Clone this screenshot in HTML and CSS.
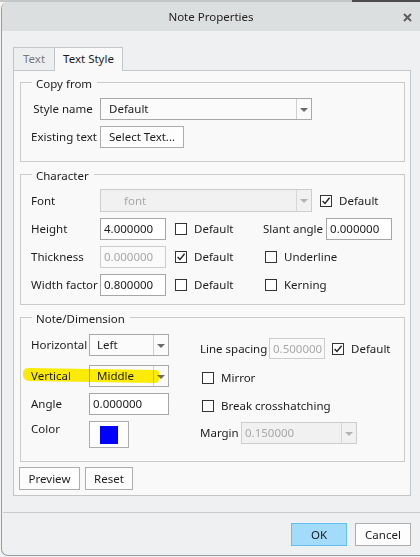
FILE: index.html
```html
<!DOCTYPE html>
<html>
<head>
<meta charset="utf-8">
<link rel="stylesheet" href="styles.css">
</head>
<body>
<div class="backdrop"></div>
<div class="dialog">
  <div class="titlebar">
    <span></span>
    <span class="title">Note Properties</span>
    <span class="close"><svg width="9" height="9" viewBox="0 0 9 9"><path d="M1 1 L8 8 M8 1 L1 8" stroke="#5c5c5c" stroke-width="1.9" fill="none"/></svg></span>
  </div>

  <div class="tabs">
    <div class="tab">Text</div>
    <div class="tab active">Text Style</div>
  </div>

  <div class="panel">
    <fieldset class="group g-copy">
      <legend>Copy from</legend>
      <div class="row">
        <span class="lbl lbl-center">Style name</span>
        <div class="combo w-style"><span class="val val-style">Default</span><span class="arrow"><i></i></span></div>
      </div>
      <div class="row mt6">
        <span class="lbl lbl-center">Existing text</span>
        <button class="btn w-select">Select Text...</button>
      </div>
    </fieldset>

    <fieldset class="group g-char">
      <legend>Character</legend>
      <div class="row h23">
        <span class="lbl lbl-char">Font</span>
        <div class="combo disabled w-style"><span class="val val-font">font</span><span class="arrow"><i></i></span></div>
        <span class="check checked ml8"></span><span class="ctext">Default</span>
      </div>
      <div class="row mt6">
        <span class="lbl lbl-char">Height</span>
        <div class="input w-num">4.000000</div>
        <div class="cell"><span class="check"></span><span class="ctext">Default</span></div>
        <span class="lbl">Slant angle</span>
        <div class="input w-num ml3">0.000000</div>
      </div>
      <div class="row mt6">
        <span class="lbl lbl-char">Thickness</span>
        <div class="input disabled w-num">0.000000</div>
        <div class="cell"><span class="check checked"></span><span class="ctext">Default</span></div>
        <span class="check ml2"></span><span class="ctext">Underline</span>
      </div>
      <div class="row mt6">
        <span class="lbl lbl-char">Width factor</span>
        <div class="input w-num">0.800000</div>
        <div class="cell"><span class="check"></span><span class="ctext">Default</span></div>
        <span class="check ml2"></span><span class="ctext">Kerning</span>
      </div>
    </fieldset>

    <fieldset class="group g-note">
      <legend>Note/Dimension</legend>
      <div class="cols">
        <div class="col-left">
          <div class="row">
            <span class="lbl lbl-note">Horizontal</span>
            <div class="combo w-align"><span class="val val-align">Left</span><span class="arrow"><i></i></span></div>
          </div>
          <div class="row mt9">
            <span class="lbl lbl-note">Vertical</span>
            <div class="combo w-align"><span class="val val-align">Middle</span><span class="arrow"><i></i></span></div>
          </div>
          <div class="row mt6">
            <span class="lbl lbl-note">Angle</span>
            <div class="input w-align">0.000000</div>
          </div>
          <div class="row row-color mt6">
            <span class="lbl lbl-note lbl-top">Color</span>
            <div class="colorbtn"><span class="swatch"></span></div>
          </div>
        </div>
        <div class="col-right">
          <div class="row h21">
            <span class="lbl lbl-ls">Line spacing</span>
            <div class="input disabled w-ls">0.500000</div>
            <span class="check checked ml7"></span><span class="ctext">Default</span>
          </div>
          <div class="row mt8">
            <span class="check ml2"></span><span class="ctext">Mirror</span>
          </div>
          <div class="row mt6">
            <span class="check ml2"></span><span class="ctext">Break crosshatching</span>
          </div>
          <div class="row mt5">
            <span class="lbl lbl-margin">Margin</span>
            <div class="combo disabled w-margin"><span class="val val-margin">0.150000</span><span class="arrow"><i></i></span></div>
          </div>
        </div>
      </div>
    </fieldset>

    <div class="panel-buttons">
      <button class="btn w-preview">Preview</button>
      <button class="btn w-reset">Reset</button>
    </div>
  </div>

  <div class="sep"></div>

  <div class="footer">
    <button class="btn ok w-dlg">OK</button>
    <button class="btn w-dlg">Cancel</button>
  </div>

  <div class="highlight"></div>
</div>
</body>
</html>
```

FILE: styles.css
```css
html, body {
  margin: 0;
  padding: 0;
  height: 557px;
  overflow: hidden;
}
body {
  background: #f3f3f3;
  font-family: "Noto Sans", "Open Sans", sans-serif;
  font-size: 11.5px;
  line-height: 16px;
  color: #1c1c1c;
}
.backdrop {
  height: 2px;
  background: linear-gradient(to right, #c3c7c7 0, #c3c7c7 352px, #4d4d4d 352px);
}
.dialog {
  position: relative;
  margin-left: 1px;
  height: 553px;
  background: #eff0f2;
  border-left: 1px solid #9c9c9c;
  border-bottom: 1px solid #9c9c9c;
  border-radius: 7px 0 0 7px;
  overflow: hidden;
}
.titlebar {
  height: 29px;
  background: #dcdfdf;
  display: grid;
  grid-template-columns: 1fr auto 1fr;
  align-items: center;
}
.title {
  color: #222;
}
.close {
  justify-self: end;
  padding-right: 8px;
  display: flex;
  align-items: center;
  padding-top: 1px;
}

/* tabs */
.tabs {
  display: flex;
  margin-top: 16px;
  margin-left: 11px;
  height: 23px;
  align-items: flex-start;
  position: relative;
  z-index: 2;
}
.tab {
  box-sizing: border-box;
  height: 23px;
  border: 1px solid #c3c6c8;
  border-bottom: none;
  background: #eceef0;
  color: #7a7a7a;
  padding: 0;
  white-space: nowrap;
  display: flex;
  align-items: center;
  justify-content: center;
  width: 42px;
}
.tab.active {
  width: 69px;
  height: 24px;
  margin-left: -1px;
  padding-bottom: 1px;
  background: #f9f9f9;
  color: #1c1c1c;
}

.panel {
  box-sizing: border-box;
  margin-left: 11px;
  width: 398px;
  background: #f9f9f9;
  border: 1px solid #c3c6c8;
  padding: 0 0 5px 0;
}

/* group boxes */
.group {
  margin: 0 5px 0 6px;
  border: 1px solid #cbcbcb;
  padding: 0 0 0 10px;
  min-width: 0;
}
.group legend {
  margin-left: 1px;
  padding: 4px 5px 0 4px;
  line-height: 16px;
}
.g-copy {
  margin-top: 1px;
  padding-top: 6px;
  padding-bottom: 13px;
}
.g-char {
  margin-top: 2px;
  padding-top: 5px;
  padding-bottom: 8px;
}
.g-note {
  margin-top: 2px;
  padding-top: 0;
  padding-bottom: 13px;
}

.row {
  display: flex;
  align-items: center;
  height: 22px;
}
.h23 { height: 23px; }
.h21 { height: 21px; }
.mt5 { margin-top: 5px; }
.mt6 { margin-top: 6px; }
.mt8 { margin-top: 8px; }
.mt9 { margin-top: 9px; }
.ml2 { margin-left: 2px; }
.ml3 { margin-left: 3px; }
.ml7 { margin-left: 7px; }
.ml8 { margin-left: 8px; }

.lbl {
  white-space: nowrap;
  flex: none;
}
.lbl-center {
  width: 64px;
  text-align: center;
  margin-right: 5px;
}
.lbl-char { width: 69px; }
.lbl-note { width: 58px; }
.lbl-ls { width: 69px; }
.lbl-margin { width: 41px; }

/* combo boxes */
.combo {
  box-sizing: border-box;
  height: 100%;
  border: 1px solid #a9a9a9;
  background: #fbfbfb;
  display: flex;
  align-items: center;
  flex: none;
}
.combo .val {
  flex: 1;
  white-space: nowrap;
}
.combo .arrow {
  width: 14px;
  height: 100%;
  border-left: 1px solid #cfcfcf;
  display: flex;
  align-items: center;
  justify-content: center;
}
.combo .arrow i {
  width: 0;
  height: 0;
  border-left: 4px solid transparent;
  border-right: 4px solid transparent;
  border-top: 4px solid #6b6b6b;
  margin-top: 1px;
}
.combo.disabled {
  background: #f1f1f1;
  border-color: #cdcdcd;
  color: #a8a8a8;
}
.combo.disabled .arrow {
  border-left-color: #d6d6d6;
}
.combo.disabled .arrow i {
  border-top-color: #b4b4b4;
}
.w-style { width: 212px; }
.w-align { width: 80px; }
.w-margin { width: 116px; }
.val-style { padding-left: 8px; }
.val-font { padding-left: 23px; }
.val-align { padding-left: 7px; }
.val-margin { padding-left: 3px; }

/* inputs */
.input {
  box-sizing: border-box;
  height: 100%;
  border: 1px solid #a6a6a6;
  background: #ffffff;
  padding-left: 3px;
  display: flex;
  align-items: center;
  flex: none;
}
.input.disabled {
  border-color: #cdcdcd;
  background: #fafafa;
  color: #a8a8a8;
}
.w-num { width: 66px; }
.w-ls { width: 56px; }

/* checkboxes */
.cell {
  width: 97px;
  display: flex;
  align-items: center;
  flex: none;
  padding-left: 0;
}
.cell .check { margin-left: 9px; }
.check {
  box-sizing: border-box;
  width: 12px;
  height: 12px;
  border: 1px solid #333333;
  background: #ffffff;
  flex: none;
  position: relative;
}
.check.checked {
  background: #ffffff url("data:image/svg+xml;utf8,<svg xmlns='http://www.w3.org/2000/svg' width='10' height='10' viewBox='0 0 10 10'><path d='M1.6 5 L4 7.4 L8.6 1.8' stroke='%23222' stroke-width='1.4' fill='none'/></svg>") center/10px 10px no-repeat;
}
.ctext {
  margin-left: 7px;
  white-space: nowrap;
}

/* buttons */
.btn {
  box-sizing: border-box;
  height: 23px;
  border: 1px solid #adadad;
  background: #fdfdfd;
  font: inherit;
  color: #1c1c1c;
  padding: 0;
  display: flex;
  align-items: center;
  justify-content: center;
}
.w-select { width: 84px; height: 22px; }
.w-preview { width: 61px; }
.w-reset { width: 48px; }
.w-dlg { width: 56px; }
.btn.ok {
  background: #a3dcfa;
  border-color: #63c0f0;
}

/* note/dimension columns */
.cols {
  display: flex;
  align-items: flex-start;
}
.col-left {
  width: 138px;
  padding-top: 7px;
}
.col-right {
  margin-left: 31px;
  padding-top: 11px;
}
.row-color {
  height: 27px;
  align-items: flex-start;
}
.lbl-top {
  padding-top: 0;
  line-height: 16px;
}
.colorbtn {
  box-sizing: border-box;
  width: 40px;
  height: 27px;
  border: 1px solid #adadad;
  background: #fdfdfd;
  padding: 4px 0 0 10px;
}
.swatch {
  display: block;
  width: 18px;
  height: 18px;
  background: #0000ff;
}

.panel-buttons {
  display: flex;
  gap: 5px;
  margin: 5px 0 0 5px;
}

.sep {
  margin-top: 16px;
  margin-left: 1px;
  height: 1px;
  background: #c9cacc;
}
.footer {
  margin-top: 10px;
  display: flex;
  justify-content: flex-end;
  gap: 8px;
  padding-right: 9px;
}

/* yellow marker highlight over "Vertical Middle" */
.highlight {
  position: absolute;
  left: 21px;
  top: 367px;
  width: 136px;
  height: 13px;
  background: #fff000;
  mix-blend-mode: multiply;
  border-radius: 5px 3px 4px 6px;
  transform: rotate(0.9deg);
  opacity: 0.97;
}
```
